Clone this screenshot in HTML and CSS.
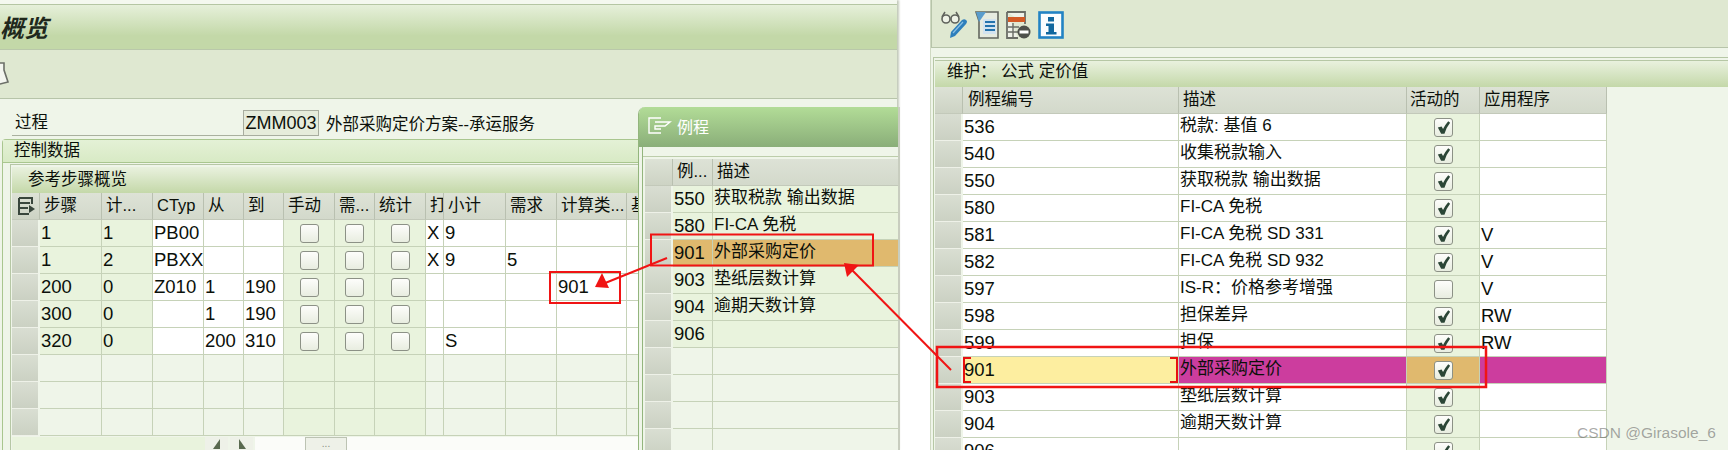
FILE: index.html
```html
<!DOCTYPE html>
<html lang="zh">
<head>
<meta charset="utf-8">
<title>例程</title>
<link rel="stylesheet" href="styles.css">
</head>
<body>
<svg class="defs" width="0" height="0"><defs><symbol id="tick" viewBox="0 0 18 18"><path d="M3 9 L7 8 L8.500 10.500 Q11 6 14 2.500 L16 4 Q12 9 10 15.500 L6.500 15.500 Z" fill="#2b4636"/></symbol></defs></svg>
<main class="stage">

  <section class="win win-left">
    <div class="topstrip"></div>
    <h1 class="title">概览</h1>
    <div class="toolbar toolbar-left">
      <svg class="pin" width="10" height="26" viewBox="0 0 10 26"><path d="M-4 2 H4 V9 L8 21 L-4 24" fill="#f4f6f0" stroke="#6c6f68" stroke-width="1.6"/></svg>
    </div>
    <div class="content">
      <div class="field">
        <span class="field-label">过程</span>
        <span class="field-code">ZMM003</span>
        <span class="field-text">外部采购定价方案--承运服务</span>
      </div>
      <div class="group">
        <div class="group-head">控制数据</div>
        <div class="panel">
          <div class="band">参考步骤概览</div>
          <table class="grid grid-left">
            <colgroup><col class="l0"><col class="l1"><col class="l2"><col class="l3"><col class="l4"><col class="l5"><col class="l6"><col class="l7"><col class="l8"><col class="l9"><col class="l10"><col class="l11"><col class="l12"><col class="l13"></colgroup>
            <thead><tr>
              <th class="corner"><svg width="20" height="20" viewBox="0 0 20 20"><path d="M2 2 H15 V8 M2 2 V18 H12 M2 7 H13 M2 12 H11" fill="none" stroke="#39463c" stroke-width="2"/><path d="M12 9 L18 13 L12 17 Z" fill="#39463c"/></svg></th>
              <th>步骤</th><th>计...</th><th>CTyp</th><th>从</th><th>到</th><th>手动</th><th>需...</th><th>统计</th><th>打</th><th>小计</th><th>需求</th><th>计算类...</th><th>基</th>
            </tr></thead>
            <tbody>
              <tr class="data"><td class="rh"></td><td class="tint">1</td><td class="tint">1</td><td>PB00</td><td></td><td></td><td class="tint ck"><span class="cb"></span></td><td class="tint ck"><span class="cb"></span></td><td class="tint ck"><span class="cb"></span></td><td>X</td><td>9</td><td></td><td></td><td></td></tr>
              <tr class="data"><td class="rh"></td><td class="tint">1</td><td class="tint">2</td><td>PBXX</td><td></td><td></td><td class="tint ck"><span class="cb"></span></td><td class="tint ck"><span class="cb"></span></td><td class="tint ck"><span class="cb"></span></td><td>X</td><td>9</td><td>5</td><td></td><td></td></tr>
              <tr class="data"><td class="rh"></td><td class="tint">200</td><td class="tint">0</td><td>Z010</td><td>1</td><td>190</td><td class="tint ck"><span class="cb"></span></td><td class="tint ck"><span class="cb"></span></td><td class="tint ck"><span class="cb"></span></td><td></td><td></td><td></td><td>901</td><td></td></tr>
              <tr class="data"><td class="rh"></td><td class="tint">300</td><td class="tint">0</td><td></td><td>1</td><td>190</td><td class="tint ck"><span class="cb"></span></td><td class="tint ck"><span class="cb"></span></td><td class="tint ck"><span class="cb"></span></td><td></td><td></td><td></td><td></td><td></td></tr>
              <tr class="data"><td class="rh"></td><td class="tint">320</td><td class="tint">0</td><td></td><td>200</td><td>310</td><td class="tint ck"><span class="cb"></span></td><td class="tint ck"><span class="cb"></span></td><td class="tint ck"><span class="cb"></span></td><td></td><td>S</td><td></td><td></td><td></td></tr>
              <tr class="empty"><td class="rh"></td><td></td><td></td><td></td><td></td><td></td><td class="tint"></td><td class="tint"></td><td class="tint"></td><td></td><td></td><td></td><td></td><td></td></tr>
              <tr class="empty"><td class="rh"></td><td></td><td></td><td></td><td></td><td></td><td class="tint"></td><td class="tint"></td><td class="tint"></td><td></td><td></td><td></td><td></td><td></td></tr>
              <tr class="empty"><td class="rh"></td><td></td><td></td><td></td><td></td><td></td><td class="tint"></td><td class="tint"></td><td class="tint"></td><td></td><td></td><td></td><td></td><td></td></tr>
            </tbody>
          </table>
          <div class="scroll">
            <div class="scroll-side"></div>
            <span class="scroll-btn"><svg width="10" height="12" viewBox="0 0 10 12"><path d="M8 1 V11 H1 Z" fill="#59694f"/></svg></span>
            <span class="scroll-btn"><svg width="10" height="12" viewBox="0 0 10 12"><path d="M2 1 V11 H9 Z" fill="#59694f"/></svg></span>
            <div class="scroll-track"><span class="scroll-thumb">...</span></div>
          </div>
        </div>
      </div>
    </div>
  </section>

  <section class="win popup">
    <div class="popup-title">
      <svg width="24" height="17" viewBox="0 0 24 17"><path d="M13 1 H1 V16 H13 M7 5 H22 L17 9 H7 V12 H13" fill="none" stroke="#fff" stroke-width="1.4"/></svg>
      <span>例程</span>
    </div>
    <div class="popup-body">
      <table class="grid grid-popup">
        <colgroup><col class="p0"><col class="p1"><col class="p2"></colgroup>
        <thead><tr><th class="corner"></th><th>例...</th><th>描述</th></tr></thead>
        <tbody>
          <tr class="tintrow"><td class="rh"></td><td class="num">550</td><td>获取税款 输出数据</td></tr>
          <tr class="tintrow"><td class="rh"></td><td class="num">580</td><td>FI-CA 免税</td></tr>
          <tr class="picked"><td class="rh"></td><td class="num">901</td><td>外部采购定价</td></tr>
          <tr class="tintrow"><td class="rh"></td><td class="num">903</td><td>垫纸层数计算</td></tr>
          <tr class="tintrow"><td class="rh"></td><td class="num">904</td><td>逾期天数计算</td></tr>
          <tr class="tintrow"><td class="rh"></td><td class="num">906</td><td></td></tr>
          <tr class="empty"><td class="rh"></td><td></td><td></td></tr>
          <tr class="empty"><td class="rh"></td><td></td><td></td></tr>
          <tr class="empty"><td class="rh"></td><td></td><td></td></tr>
          <tr class="empty"><td class="rh"></td><td></td><td></td></tr>
        </tbody>
      </table>
    </div>
  </section>

  <section class="win win-right">
    <div class="toolbar toolbar-right">
      <svg width="27" height="28" viewBox="0 0 27 28"><circle cx="5" cy="8" r="4" fill="#eef2e6" stroke="#5f625c" stroke-width="1.6"/><circle cx="14" cy="8" r="4" fill="#eef2e6" stroke="#5f625c" stroke-width="1.6"/><path d="M1 6 L4 1 M18 6 L15 1" stroke="#5f625c" stroke-width="1.5"/><path d="M9 27 L10 21 L21 9 Q24 7 26 10 Q26 12 25 13 L14 25 Z" fill="#2e7fbc"/><path d="M12 22 L22 11" stroke="#8cc0e4" stroke-width="1.2"/></svg>
      <svg width="24" height="28" viewBox="0 0 24 28"><path d="M1 1 H23 V27 H4 V10 Z" fill="#e6ebe0" stroke="#63675f" stroke-width="1.6"/><path d="M1 1 H11 L4 11 Z" fill="#5a9ccc"/><rect x="8" y="8" width="13" height="15" fill="#d3e3ef"/><path d="M10 11 H20 M10 15 H20 M10 19 H20" stroke="#2473ad" stroke-width="1.8"/></svg>
      <svg width="25" height="28" viewBox="0 0 25 28"><path d="M1 1 H19 V13 M1 1 V27 H12" fill="#eef1e8" stroke="#6a6d66" stroke-width="1.8"/><rect x="2" y="6" width="17" height="5" fill="#d35a25"/><path d="M2 16 H13 M7 12 V26 M2 21 H12" stroke="#6a6d66" stroke-width="1.4"/><circle cx="18" cy="21" r="6.500" fill="#4d504b"/><rect x="13.500" y="19.500" width="9" height="3" fill="#fff"/></svg>
      <svg width="26" height="28" viewBox="0 0 26 28"><rect x="1.500" y="1.500" width="23" height="25" fill="#fbfdfe" stroke="#2283c4" stroke-width="2.600"/><rect x="10" y="6" width="6" height="4.500" fill="#11689f"/><path d="M8 12.500 H16 V21 H18.500 V23.500 H8 V21 H10.500 V15 H8 Z" fill="#11689f"/></svg>
    </div>
    <div class="right-body">
      <div class="panel panel-right">
        <div class="band">维护： 公式 定价值</div>
        <table class="grid grid-right">
          <colgroup><col class="r0"><col class="r1"><col class="r2"><col class="r3"><col class="r4"></colgroup>
          <thead><tr><th class="corner"></th><th class="first">例程编号</th><th>描述</th><th class="narrow">活动的</th><th>应用程序</th></tr></thead>
          <tbody>
            <tr class="data"><td class="rh"></td><td class="num">536</td><td>税款: 基值 6</td><td class="tint ck"><span class="cb"><svg><use href="#tick"/></svg></span></td><td></td></tr>
            <tr class="data"><td class="rh"></td><td class="num">540</td><td>收集税款输入</td><td class="tint ck"><span class="cb"><svg><use href="#tick"/></svg></span></td><td></td></tr>
            <tr class="data"><td class="rh"></td><td class="num">550</td><td>获取税款 输出数据</td><td class="tint ck"><span class="cb"><svg><use href="#tick"/></svg></span></td><td></td></tr>
            <tr class="data"><td class="rh"></td><td class="num">580</td><td>FI-CA 免税</td><td class="tint ck"><span class="cb"><svg><use href="#tick"/></svg></span></td><td></td></tr>
            <tr class="data"><td class="rh"></td><td class="num">581</td><td>FI-CA 免税 SD 331</td><td class="tint ck"><span class="cb"><svg><use href="#tick"/></svg></span></td><td class="num">V</td></tr>
            <tr class="data"><td class="rh"></td><td class="num">582</td><td>FI-CA 免税 SD 932</td><td class="tint ck"><span class="cb"><svg><use href="#tick"/></svg></span></td><td class="num">V</td></tr>
            <tr class="data"><td class="rh"></td><td class="num">597</td><td>IS-R：价格参考增强</td><td class="tint ck"><span class="cb"></span></td><td class="num">V</td></tr>
            <tr class="data"><td class="rh"></td><td class="num">598</td><td>担保差异</td><td class="tint ck"><span class="cb"><svg><use href="#tick"/></svg></span></td><td class="num">RW</td></tr>
            <tr class="data"><td class="rh"></td><td class="num">599</td><td>担保</td><td class="tint ck"><span class="cb"><svg><use href="#tick"/></svg></span></td><td class="num">RW</td></tr>
            <tr class="data hit"><td class="rh"></td><td class="num hit-key">901<i class="caret caret-l"></i><i class="caret caret-r"></i></td><td class="hit-mag">外部采购定价</td><td class="hit-or ck"><span class="cb"><svg><use href="#tick"/></svg></span></td><td class="hit-mag"></td></tr>
            <tr class="data"><td class="rh"></td><td class="num">903</td><td>垫纸层数计算</td><td class="tint ck"><span class="cb"><svg><use href="#tick"/></svg></span></td><td></td></tr>
            <tr class="data"><td class="rh"></td><td class="num">904</td><td>逾期天数计算</td><td class="tint ck"><span class="cb"><svg><use href="#tick"/></svg></span></td><td></td></tr>
            <tr class="data"><td class="rh"></td><td class="num">906</td><td></td><td class="tint ck"><span class="cb"><svg><use href="#tick"/></svg></span></td><td></td></tr>
          </tbody>
        </table>
      </div>
    </div>
  </section>

  <svg class="marks" width="1728" height="450" viewBox="0 0 1728 450">
    <g fill="none" stroke="#f01414" stroke-width="2">
      <rect x="550" y="272" width="70" height="31"/>
      <rect x="651" y="234.500" width="222" height="31"/>
      <rect x="937" y="347" width="549" height="40" stroke-width="2.500"/>
      <path d="M667 258 L604 283.500"/>
      <path d="M951 370 L852 270"/>
    </g>
    <path d="M595 287 L602 273 L609 288 Z" fill="#f01414"/>
    <path d="M844 263 L859 265 L847 277 Z" fill="#f01414"/>
  </svg>
  <div class="watermark">CSDN @Girasole_6</div>
</main>
</body>
</html>
```

FILE: styles.css
```css
* { box-sizing: border-box; }
html, body { margin: 0; padding: 0; background: #fff; }
body { font-family: "Liberation Sans", "Noto Sans CJK SC", sans-serif; font-size: 17px; color: #0b100a; }
.defs { position: absolute; }
.stage { position: relative; width: 1728px; height: 450px; overflow: hidden; background: #fff; }
.win { position: absolute; top: 0; overflow: hidden; }

/* left window */
.win-left { left: 0; width: 897px; height: 450px; background: #eff5e9; box-shadow: 2px 0 2px #c4cabb; }
.topstrip { height: 5px; background: #f4f8ef; border-bottom: 1px solid #b5c6a3; }
.title { margin: 0; height: 45px; line-height: 43px; font-size: 24px; font-weight: 700; font-style: italic; font-family: "Noto Sans CJK SC", sans-serif; color: #20281c; background: linear-gradient(#e6f0da, #c3d8a8 70%); border-bottom: 1px solid #b9c8aa; }
.toolbar { background: #dfe8d1; }
.toolbar-left { height: 49px; border-bottom: 1px solid #b7c4a9; padding-top: 11px; line-height: 0; }
.content { height: 351px; overflow: hidden; }
.field { display: flex; align-items: center; height: 26px; margin: 11px 0 3px 12px; font-size: 16.500px; }
.field-label { width: 231px; height: 26px; padding-left: 3px; line-height: 24px; border-bottom: 1px solid #a9b09f; }
.field-code { width: 76px; height: 26px; line-height: 24px; text-align: center; font-size: 18px; background: #e6ecdb; border: 1px solid #a8ad9f; }
.field-text { margin-left: 7px; }
.group { margin-left: 2px; border: 1px solid #a9c68f; border-bottom: 0; border-radius: 4px 0 0 0; }
.group-head { height: 23px; line-height: 21px; padding-left: 11px; font-size: 16.500px; background: linear-gradient(#e4f1d6, #d8eac5); border-bottom: 1px solid #a9c68f; }
.panel { margin: 1px 0 0 7px; padding: 2px 0 0 1px; border-top: 1px solid #b6c7a5; border-left: 1px solid #b6c7a5; }
.band { height: 26px; line-height: 24px; padding-left: 16px; font-size: 16.500px; background: linear-gradient(#e9f1de, #c4d8a9); }
.scroll { display: flex; height: 13px; margin-top: 1px; }
.scroll-side { width: 193px; background: #e9f3dd; }
.scroll-btn { width: 23px; margin-right: 2px; background: #eef1e8; display: flex; justify-content: center; align-items: flex-end; line-height: 0; }
.scroll-track { width: 400px; padding-left: 50px; background: #fbfcf9; }
.scroll-thumb { display: block; width: 42px; height: 13px; border: 1px solid #bcc3b3; border-bottom: 0; background: #eef1e8; color: #8a8f84; font-size: 10px; line-height: 12px; text-align: center; }

/* tables */
.grid { border-collapse: separate; border-spacing: 0; table-layout: fixed; }
.grid th { height: 27px; padding: 0 0 2px 4px; line-height: 20px; overflow: hidden; white-space: nowrap; text-align: left; font-weight: 400; font-size: 16.500px; background: linear-gradient(#dde2d6, #d3d9cb); border-right: 1px solid #b9c0b0; border-bottom: 1px solid #c3c9ba; }
.grid .corner { padding: 0 0 0 5px; line-height: 0; background: linear-gradient(#dde2d6, #cdd3c4); }
.grid td { height: 27px; padding: 0 0 0 1px; line-height: 20px; overflow: hidden; white-space: nowrap; border-right: 1px solid #c6d2b8; border-bottom: 1px solid #c6d2b8; background: #fff; }
.grid td.rh { padding: 0; background: linear-gradient(#d9ded2, #cbd1c3); border-right: 2px solid #eff5e9; border-bottom: 1px solid #eef1e8; }
.grid .tint { background: #e9f3dd; }
.grid .empty td { background: #eff5e9; }
.grid .empty td.tint { background: #e9f3dd; }
.grid .tintrow td { background: #e9f3dd; }
.grid .picked td { background: #e0b96e; }
.grid .empty td.rh, .grid .tintrow td.rh, .grid .picked td.rh { background: linear-gradient(#d9ded2, #cbd1c3); }
.grid-left td, .num { font-size: 18.500px; }
.grid-popup td:not(.num):not(.rh), .grid-right td:not(.num):not(.ck):not(.rh) { padding-bottom: 3px; }
.grid td.ck { padding: 0; text-align: center; line-height: 0; }
.cb { display: inline-block; width: 19px; height: 19px; border: 1px solid #8c9186; border-radius: 3px; background: linear-gradient(#fdfdfb, #e8ede0); vertical-align: middle; }
.cb svg { display: block; width: 17px; height: 17px; }

.l0 { width: 28px; } .l1 { width: 62px; } .l2 { width: 51px; } .l3 { width: 51px; } .l4 { width: 40px; } .l5 { width: 40px; } .l6 { width: 51px; } .l7 { width: 40px; } .l8 { width: 51px; } .l9 { width: 18px; } .l10 { width: 62px; } .l11 { width: 51px; } .l12 { width: 70px; } .l13 { width: 20px; }
.grid-left { width: 635px; }

/* popup */
.popup { left: 638px; top: 107px; width: 262px; height: 343px; border-radius: 7px 0 0 0; background: #eff5e9; border-left: 1px solid #93b57d; border-right: 2px solid #c8cdbf; }
.popup-title { display: flex; align-items: center; gap: 5px; height: 40px; padding: 0 0 3px 9px; color: #fff; font-size: 16px; background: linear-gradient(#b2dc97, #8aae79); }
.popup-body { margin-left: 3px; padding: 12px 0 0 2px; border-left: 1px solid #93b57d; box-shadow: inset 0 9px 0 #eff5e9, inset 0 10px 0 #bccdaa; }
.grid-popup { width: 254px; }
.p0 { width: 28px; } .p1 { width: 40px; } .p2 { width: 186px; }

/* right window */
.win-right { left: 930px; width: 798px; height: 450px; background: #eff5e9; padding-left: 1px; box-shadow: inset 1px 0 0 #cfd9c2; }
.toolbar-right { display: flex; align-items: flex-start; gap: 7px; height: 48px; padding: 11px 0 0 9px; border-bottom: 1px solid #b7c4a9; border-left: 1px solid #b7c4a9; }
.right-body { padding-top: 9px; }
.panel-right { margin: 0 0 0 2px; padding-left: 1px; border-top: 1px solid #b6c7a5; }
.panel-right .band { height: 27px; padding-left: 12px; border-top: 1px solid #b6c7a5; line-height: 21px; }
.grid-right { width: 672px; }
.grid-right th.first { padding-left: 5px; }
.grid-right th.narrow { padding-left: 3px; }
.r0 { width: 28px; } .r1 { width: 216px; } .r2 { width: 228px; } .r3 { width: 73px; } .r4 { width: 127px; }
.grid .hit-key { position: relative; overflow: visible; background: #fdeea0; }
.grid .hit-mag { background: #cc3d9e; }
.grid .hit-or { background: #e0b96e; }
.caret { position: absolute; top: 0; bottom: 0; width: 8px; border: 2px solid #e81010; border-width: 2px 0; }
.caret-l { left: 0; border-left-width: 2px; }
.caret-r { right: 0; border-right-width: 2px; }

/* overlays */
.marks { position: absolute; left: 0; top: 0; }
.watermark { position: absolute; left: 1577px; top: 424px; font-size: 15.500px; line-height: 18px; color: rgba(95, 95, 95, .55); white-space: nowrap; }
```
